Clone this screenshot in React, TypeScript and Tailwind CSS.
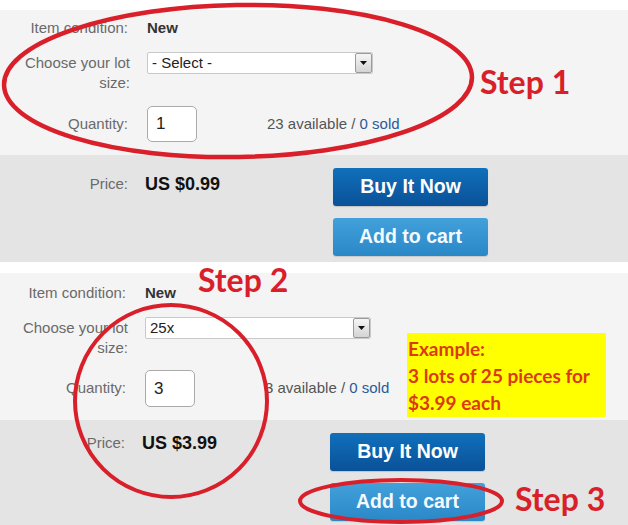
import React from 'react';

type BlockProps = {
  lot: string;
  qty: string;
  available: string;
  price: string;
  first: boolean;
};

function SelectBox({ value }: { value: string }) {
  return (
    <div className="flex h-[22px] w-[226px] items-center rounded-[2px] border border-[#c9c9c9] bg-white pl-[4px]">
      <span className="flex-1 text-[15px] text-[#222]">{value}</span>
      <span className="flex h-[20px] w-[17px] items-center justify-center rounded-[2px] border border-[#9a9a9a] bg-gradient-to-b from-[#f6f6f6] to-[#d4d4d4]">
        <svg width="7" height="4" viewBox="0 0 7 4">
          <path d="M0 0h7L3.5 4z" fill="#111" />
        </svg>
      </span>
    </div>
  );
}

function ListingBlock({ lot, qty, available, price, first }: BlockProps) {
  return (
    <div className="flex flex-col font-['Liberation_Sans',Arial,sans-serif]">
      {/* selection area */}
      <div className={`flex flex-col bg-[#f4f4f4] ${first ? 'h-[145px] pt-[10px]' : 'h-[147px] pt-[12px] pr-[2px] -ml-[2px]'}`}>
        <div className="flex h-[16px] items-center">
          <div className="w-[128px] text-right text-[15px] text-[#6a6a6a]">Item condition:</div>
          <div className="ml-[19px] text-[15px] font-bold text-[#333]">New</div>
        </div>
        <div className="mt-[16px] flex items-start">
          <div className="w-[130px] -mr-[2px] pt-[1px] text-right text-[15px] leading-[20px] text-[#6a6a6a]">
            Choose your lot size:
          </div>
          <div className="ml-[19px]">
            <SelectBox value={lot} />
          </div>
        </div>
        <div className={`flex items-center ${first ? 'mt-[13px]' : 'mt-[12px]'}`}>
          <div className="w-[128px] text-right text-[15px] text-[#6a6a6a]">Quantity:</div>
          <div className={`ml-[19px] flex w-[50px] items-center rounded-[5px] border border-[#aaa] bg-white pl-[8px] text-[17px] text-[#222] ${first ? 'h-[36px]' : 'h-[37px]'}`}>
            {qty}
          </div>
          <div className="ml-[70px] text-[15px] text-[#555]">
            {available} available / <span className="text-[#2a5a98]">0 sold</span>
          </div>
        </div>
      </div>
      {/* price area */}
      <div className={`flex bg-[#e4e4e4] ${first ? 'h-[107px]' : 'h-[105px] -ml-[3px] pr-[3px]'}`}>
        <div className={`flex h-[22px] items-center ${first ? 'mt-[18px]' : 'mt-[12px]'}`}>
          <div className="w-[128px] text-right text-[15px] text-[#6a6a6a]">Price:</div>
          <div className="ml-[17px] w-[188px] text-[18px] font-bold text-[#111]">{price}</div>
        </div>
        <div className="mt-[13px] flex flex-col gap-[12px]">
          <div className="flex h-[38px] w-[155px] items-center justify-center rounded-[3px] bg-gradient-to-b from-[#1170bb] to-[#0a5198] text-[19.5px] font-bold text-white shadow-[0_1px_1px_rgba(0,0,0,0.15)]">
            Buy It Now
          </div>
          <div className="flex h-[38px] w-[155px] items-center justify-center rounded-[3px] bg-gradient-to-b from-[#42a0da] to-[#2a88c8] text-[19.5px] font-bold text-[#f2faff] shadow-[0_1px_1px_rgba(0,0,0,0.12)]">
            Add to cart
          </div>
        </div>
      </div>
    </div>
  );
}

export default function App() {
  return (
    <div className="relative h-[525px] w-[628px] overflow-hidden bg-white">
      <div className="pt-[10px]">
        <ListingBlock lot="- Select -" qty="1" available="23" price="US $0.99" first />
      </div>
      <div className="pt-[11px]">
        <ListingBlock lot="25x" qty="3" available="3" price="US $3.99" first={false} />
      </div>

      {/* example note */}
      <div className="absolute left-[407px] top-[333px] h-[84px] w-[199px] bg-[#ffff00] pl-[1px] pt-[2px] font-['Lato',sans-serif] text-[19px] font-bold leading-[27px] text-[#db3a12]">
        <div>Example:</div>
        <div>3 lots of 25 pieces for</div>
        <div>$3.99 each</div>
      </div>

      {/* hand-drawn annotations */}
      <svg className="pointer-events-none absolute left-0 top-0" width="628" height="525" viewBox="0 0 628 525">
        <ellipse cx="238" cy="81" rx="234" ry="76" fill="none" stroke="#d81f2a" strokeWidth="4.5" transform="rotate(-1 238 81)" />
        <ellipse cx="171" cy="401" rx="96" ry="96" fill="none" stroke="#d81f2a" strokeWidth="4" />
        <ellipse cx="401" cy="501" rx="101" ry="21" fill="none" stroke="#d81f2a" strokeWidth="4" />
      </svg>
      <div className="absolute left-[480px] top-[64px] font-['Lato',sans-serif] text-[32px] font-bold leading-[36px] text-[#d81f2a]">Step 1</div>
      <div className="absolute left-[198px] top-[262px] font-['Lato',sans-serif] text-[32px] font-bold leading-[36px] text-[#d81f2a]">Step 2</div>
      <div className="absolute left-[515px] top-[481px] font-['Lato',sans-serif] text-[32px] font-bold leading-[36px] text-[#d81f2a]">Step 3</div>
    </div>
  );
}
